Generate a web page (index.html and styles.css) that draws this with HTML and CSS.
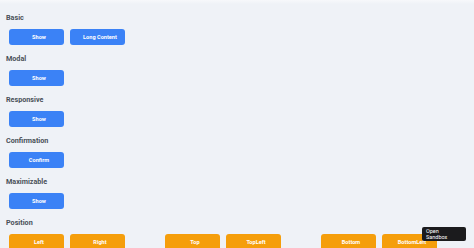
FILE: index.html
```html
<!doctype html>
<html>
  <head>
    <meta charset="utf-8"/>
    <title>Dialog demo</title>
    <link rel="stylesheet" href="styles.css">
  </head>
  <body>
    <div class="demo">
      <section class="card">
        <h5>Basic</h5>
        <div class="row">
          <button class="btn">Show</button>
          <button class="btn">Long Content</button>
        </div>
      </section>
      <section class="card">
        <h5>Modal</h5>
        <div class="row">
          <button class="btn">Show</button>
        </div>
      </section>
      <section class="card">
        <h5>Responsive</h5>
        <div class="row">
          <button class="btn">Show</button>
        </div>
      </section>
      <section class="card">
        <h5>Confirmation</h5>
        <div class="row">
          <button class="btn">Confirm</button>
        </div>
      </section>
      <section class="card">
        <h5>Maximizable</h5>
        <div class="row">
          <button class="btn">Show</button>
        </div>
      </section>
      <section class="card">
        <h5>Position</h5>
        <div class="row positions">
          <div class="group">
            <button class="btn warn">Left</button>
            <button class="btn warn">Right</button>
          </div>
          <div class="group">
            <button class="btn warn">Top</button>
            <button class="btn warn">TopLeft</button>
          </div>
          <div class="group">
            <button class="btn warn">Bottom</button>
            <button class="btn warn">BottomLeft</button>
          </div>
        </div>
      </section>
    </div>
    <div class="sandbox-tip">Open<br>Sandbox</div>
  </body>
</html>
```

FILE: styles.css
```css
* {
  padding: 0;
  margin: 0;
  box-sizing: border-box;
}

html, body {
  height: 100%;
  overflow: hidden;
}

body {
  font-family: Roboto, "Liberation Sans", sans-serif;
  background: linear-gradient(to bottom, #f7f8fb 0, #eff2f7 4px) #eff2f7;
  color: #495057;
  position: relative;
}

.demo {
  padding: 13px 6px 0 6px;
}

.card {
  margin-bottom: 9px;
}

.card h5 {
  font-size: 7.2px;
  line-height: 9px;
  font-weight: 700;
  margin-bottom: 7px;
}

.row {
  display: flex;
}

.btn {
  width: 55px;
  height: 16px;
  margin: 0 3px;
  border: none;
  border-radius: 3px;
  background: #3b82f6;
  color: #fff;
  font-family: inherit;
  font-size: 5.6px;
  font-weight: 700;
  padding: 0 0 0 5px;
  display: flex;
  align-items: center;
  justify-content: center;
}

.btn.warn {
  background: #f59e0b;
}

.positions {
  gap: 34px;
}

.group {
  display: flex;
}

.sandbox-tip {
  position: absolute;
  left: 422px;
  top: 227px;
  width: 44px;
  height: 14px;
  padding: 1px 4px;
  background: #1b1b1d;
  border-radius: 2px;
  color: #fff;
  font-size: 5.5px;
  line-height: 6px;
}
```
